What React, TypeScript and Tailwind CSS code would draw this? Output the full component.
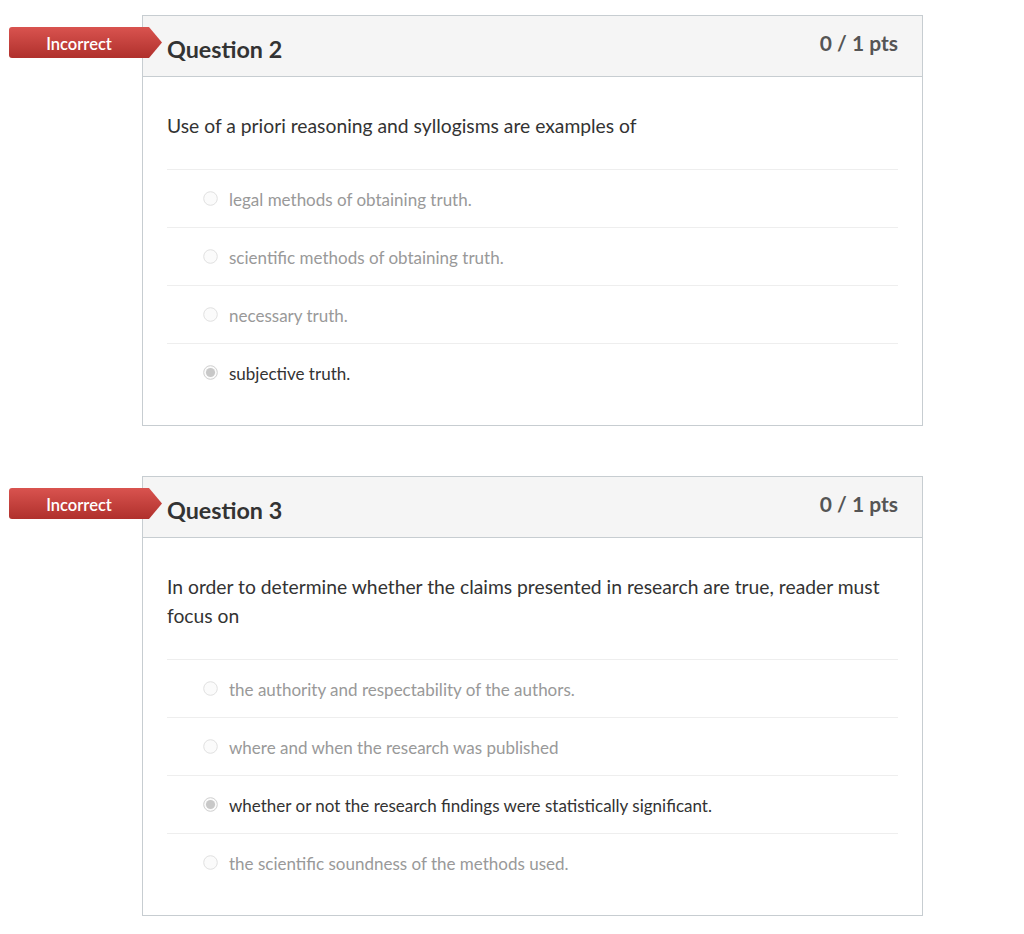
import React from "react";

type Q = {
  num: number;
  text: string;
  answers: string[];
  selected: number;
};

const questions: Q[] = [
  {
    num: 2,
    text: "Use of a priori reasoning and syllogisms are examples of",
    answers: [
      "legal methods of obtaining truth.",
      "scientific methods of obtaining truth.",
      "necessary truth.",
      "subjective truth.",
    ],
    selected: 3,
  },
  {
    num: 3,
    text: "In order to determine whether the claims presented in research are true, reader must focus on",
    answers: [
      "the authority and respectability of the authors.",
      "where and when the research was published",
      "whether or not the research findings were statistically significant.",
      "the scientific soundness of the methods used.",
    ],
    selected: 2,
  },
];

function Radio({ checked }: { checked: boolean }) {
  return (
    <svg width="15" height="15" viewBox="0 0 15 15" className="shrink-0">
      <circle cx="7.5" cy="7.5" r="6.8" fill="#fbfbfb" stroke={checked ? "#cfcfcf" : "#e0e0e0"} strokeWidth="1" />
      {checked && <circle cx="7.5" cy="7.5" r="4.6" fill="#c8c8c8" />}
    </svg>
  );
}

function Card({ q }: { q: Q }) {
  return (
    <div className="relative w-[781px] border border-[#c7cdd1] bg-white">
      <div
        className="absolute left-[-134px] top-[11px] flex h-[31px] w-[153px] items-center rounded-l-[3px] bg-gradient-to-b from-[#d9534f] to-[#b0302c] pr-[13px] pt-[3px] text-white"
        style={{
          clipPath:
            "polygon(0 0, calc(100% - 13px) 0, 100% 50%, calc(100% - 13px) 100%, 0 100%)",
        }}
      >
        <span className="w-full text-center text-[16.5px] font-semibold">Incorrect</span>
      </div>
      <div className="flex h-[61px] items-start justify-between border-b border-[#c7cdd1] bg-[#f5f5f5] px-[24px] pt-[13px]">
        <div className="mt-[5px] text-[23.3px] font-bold leading-[30px] text-[#333]">
          Question {q.num}
        </div>
        <div className="text-[21px] font-bold leading-[28px] text-[#555]">0 / 1 pts</div>
      </div>
      <div className="px-[24px] pb-[24px] pt-[34px]">
        <div className="mb-[29px] text-[19.3px] leading-[29px] text-[#333]">{q.text}</div>
        <div>
          {q.answers.map((a, i) => (
            <div
              key={i}
              className="flex h-[58px] items-center border-t border-[#eeeeee] pl-[36px]"
            >
              <Radio checked={i === q.selected} />
              <span
                className={
                  "ml-[11px] mt-[3px] text-[17px] " +
                  (i === q.selected ? "text-[#333]" : "text-[#999]")
                }
              >
                {a}
              </span>
            </div>
          ))}
        </div>
      </div>
    </div>
  );
}

export default function App() {
  return (
    <div
      className="min-h-[934px] bg-white pl-[142px] pt-[15px]"
      style={{ fontFamily: "Lato, 'Open Sans', sans-serif" }}
    >
      <div className="flex flex-col gap-[50px]">
        {questions.map((q) => (
          <Card key={q.num} q={q} />
        ))}
      </div>
    </div>
  );
}
